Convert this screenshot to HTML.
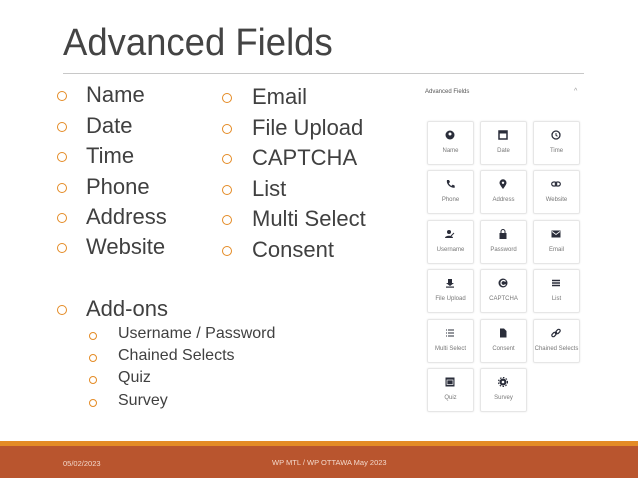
<!DOCTYPE html>
<html><head><meta charset="utf-8"><style>
body{margin:0;width:638px;height:478px;position:relative;background:#fff;font-family:"Liberation Sans",sans-serif;overflow:hidden;color:#404040}
.t{position:absolute;white-space:nowrap;transform-origin:left center}
.b{position:absolute;width:8px;height:8px;border:1.3px solid #E48B25;border-radius:50%}
.bs{position:absolute;width:6px;height:6px;border:1.2px solid #E48B25;border-radius:50%}
.c{position:absolute;width:45px;height:42px;border:1px solid #e6e6e6;border-radius:2px;box-shadow:0 0 2px rgba(0,0,0,.08)}
.c svg{position:absolute;left:17px;top:8px}
.c span{position:absolute;left:-6px;right:-6px;top:26px;text-align:center;font-size:6px;color:#777}
</style></head><body>
<div class="t" style="left:63px;top:22px;font-size:38px;color:#444;transform:scaleX(0.96)">Advanced Fields</div>
<div style="position:absolute;left:63px;top:73px;width:521px;height:1px;background:#c8c8c8"></div>

<div class="b" style="left:57px;top:91px"></div><div class="t" style="left:86px;top:82px;font-size:22px">Name</div>
<div class="b" style="left:57px;top:122px"></div><div class="t" style="left:86px;top:113px;font-size:22px">Date</div>
<div class="b" style="left:57px;top:152px"></div><div class="t" style="left:86px;top:143px;font-size:22px">Time</div>
<div class="b" style="left:57px;top:183px"></div><div class="t" style="left:86px;top:174px;font-size:22px">Phone</div>
<div class="b" style="left:57px;top:213px"></div><div class="t" style="left:86px;top:204px;font-size:22px">Address</div>
<div class="b" style="left:57px;top:243px"></div><div class="t" style="left:86px;top:234px;font-size:22px">Website</div>

<div class="b" style="left:222px;top:93px"></div><div class="t" style="left:252px;top:84px;font-size:22px">Email</div>
<div class="b" style="left:222px;top:124px"></div><div class="t" style="left:252px;top:115px;font-size:22px">File Upload</div>
<div class="b" style="left:222px;top:154px"></div><div class="t" style="left:252px;top:145px;font-size:22px">CAPTCHA</div>
<div class="b" style="left:222px;top:185px"></div><div class="t" style="left:252px;top:176px;font-size:22px">List</div>
<div class="b" style="left:222px;top:215px"></div><div class="t" style="left:252px;top:206px;font-size:22px">Multi Select</div>
<div class="b" style="left:222px;top:246px"></div><div class="t" style="left:252px;top:237px;font-size:22px">Consent</div>

<div class="b" style="left:57px;top:305px"></div><div class="t" style="left:86px;top:296px;font-size:22px">Add-ons</div>
<div class="bs" style="left:89px;top:332px"></div><div class="t" style="left:118px;top:325px;font-size:16px">Username / Password</div>
<div class="bs" style="left:89px;top:354px"></div><div class="t" style="left:118px;top:347px;font-size:16px">Chained Selects</div>
<div class="bs" style="left:89px;top:376px"></div><div class="t" style="left:118px;top:369px;font-size:16px">Quiz</div>
<div class="bs" style="left:89px;top:399px"></div><div class="t" style="left:118px;top:392px;font-size:16px">Survey</div>

<div class="t" style="left:425px;top:89px;font-size:6px;color:#555">Advanced Fields</div>
<div class="t" style="left:574px;top:88px;font-size:7px;color:#999">^</div>

<div class="c" style="left:427px;top:121px"><svg width="10" height="10"><circle cx="5" cy="5" r="4.5" fill="#2a2d3a"/><circle cx="5" cy="4" r="1.5" fill="#fff"/></svg><span>Name</span></div>
<div class="c" style="left:480px;top:121px"><svg width="10" height="10"><rect x="1" y="1" width="8" height="8" fill="none" stroke="#2a2d3a" stroke-width="1.5"/><rect x="1" y="1" width="8" height="2.5" fill="#2a2d3a"/></svg><span>Date</span></div>
<div class="c" style="left:533px;top:121px"><svg width="10" height="10"><circle cx="5" cy="5" r="4" fill="none" stroke="#2a2d3a" stroke-width="1.3"/><path d="M5 3v2.3l1.5 1" stroke="#2a2d3a" fill="none"/></svg><span>Time</span></div>
<div class="c" style="left:427px;top:170px"><svg width="10" height="10"><path d="M2 1l2 0 1 2-1.2 1.2c.6 1.2 1.5 2.1 2.7 2.7L7.7 5.6l2 1v2.2C5 9 1 5 2 1z" fill="#2a2d3a"/></svg><span>Phone</span></div>
<div class="c" style="left:480px;top:170px"><svg width="10" height="10"><path d="M5 10C2 6 1.5 5 1.5 3.8a3.5 3.5 0 0 1 7 0C8.5 5 8 6 5 10z" fill="#2a2d3a"/><circle cx="5" cy="3.8" r="1.2" fill="#fff"/></svg><span>Address</span></div>
<div class="c" style="left:533px;top:170px"><svg width="10" height="10"><rect x="0.7" y="3" width="5" height="4" rx="2" fill="none" stroke="#2a2d3a" stroke-width="1.2"/><rect x="4.3" y="3" width="5" height="4" rx="2" fill="none" stroke="#2a2d3a" stroke-width="1.2"/></svg><span>Website</span></div>
<div class="c" style="left:427px;top:220px"><svg width="10" height="10"><circle cx="4" cy="3" r="2" fill="#2a2d3a"/><path d="M0 9c0-3 8-3 8 0z" fill="#2a2d3a"/><path d="M6 7l3-3" stroke="#2a2d3a"/></svg><span>Username</span></div>
<div class="c" style="left:480px;top:220px"><svg width="10" height="10"><rect x="1.5" y="4" width="7" height="6" fill="#2a2d3a"/><path d="M3 4V2.5a2 2 0 0 1 4 0V4" stroke="#2a2d3a" fill="none"/></svg><span>Password</span></div>
<div class="c" style="left:533px;top:220px"><svg width="10" height="10"><rect x="0.5" y="1.5" width="9" height="7" fill="#2a2d3a"/><path d="M1 2.5l4 3 4-3" stroke="#fff" fill="none" stroke-width=".8"/></svg><span>Email</span></div>
<div class="c" style="left:427px;top:269px"><svg width="10" height="10"><path d="M3 1h4v4h2L5 8 1 5h2z" fill="#2a2d3a"/><rect x="1" y="8.5" width="8" height="1.2" fill="#2a2d3a"/></svg><span>File Upload</span></div>
<div class="c" style="left:480px;top:269px"><svg width="10" height="10"><circle cx="5" cy="5" r="4.5" fill="#2a2d3a"/><path d="M7.5 3.6A2.5 2.5 0 1 0 7.5 6.4" stroke="#fff" fill="none" stroke-width="1.2"/></svg><span>CAPTCHA</span></div>
<div class="c" style="left:533px;top:269px"><svg width="10" height="10"><path d="M1 2.5h8M1 5h8M1 7.5h8" stroke="#2a2d3a" stroke-width="1.5"/></svg><span>List</span></div>
<div class="c" style="left:427px;top:319px"><svg width="10" height="10"><path d="M1 2h1M3 2h6M1 5h1M3 5h6M1 8h1M3 8h6" stroke="#2a2d3a" stroke-width=".9"/></svg><span>Multi Select</span></div>
<div class="c" style="left:480px;top:319px"><svg width="10" height="10"><path d="M2 0.5h4l2.5 2.5v6.5H2z" fill="#2a2d3a"/></svg><span>Consent</span></div>
<div class="c" style="left:533px;top:319px"><svg width="10" height="10"><path d="M4 6l2-2" stroke="#2a2d3a" stroke-width="1.2"/><rect x="0.5" y="5" width="5" height="3" rx="1.5" transform="rotate(-45 3 6.5)" fill="none" stroke="#2a2d3a" stroke-width="1.2"/><rect x="4.5" y="2" width="5" height="3" rx="1.5" transform="rotate(-45 7 3.5)" fill="none" stroke="#2a2d3a" stroke-width="1.2"/></svg><span>Chained Selects</span></div>
<div class="c" style="left:427px;top:368px"><svg width="10" height="10"><rect x="0.5" y="0.5" width="9" height="9" fill="#2a2d3a"/><rect x="2" y="3" width="6" height="4.5" fill="none" stroke="#fff" stroke-width=".7"/></svg><span>Quiz</span></div>
<div class="c" style="left:480px;top:368px"><svg width="10" height="10"><circle cx="5" cy="5" r="3.5" fill="#2a2d3a"/><circle cx="5" cy="5" r="4.5" fill="none" stroke="#2a2d3a" stroke-width="1.2" stroke-dasharray="1.5 1.5"/><circle cx="5" cy="5" r="1.3" fill="#fff"/></svg><span>Survey</span></div>

<div style="position:absolute;left:0;top:441px;width:638px;height:5px;background:#E48B25"></div>
<div style="position:absolute;left:0;top:446px;width:638px;height:32px;background:#B9552E"></div>
<div class="t" style="left:63px;top:459px;font-size:7.5px;color:#f3d9cc">05/02/2023</div>
<div class="t" style="left:272px;top:458px;font-size:7.5px;color:#f3d9cc">WP MTL / WP OTTAWA May 2023</div>
</body></html>
